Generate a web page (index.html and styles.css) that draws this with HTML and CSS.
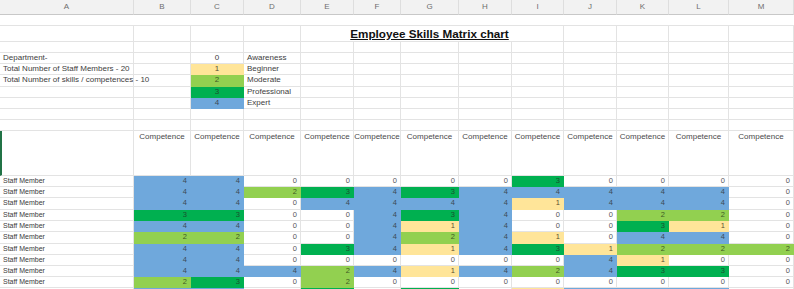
FILE: index.html
```html
<!DOCTYPE html>
<html>
<head>
<meta charset="utf-8">
<link rel="stylesheet" href="styles.css">
</head>
<body>
<div class="sheet">
  <div class="h">A</div><div class="h">B</div><div class="h">C</div><div class="h">D</div><div class="h">E</div><div class="h">F</div><div class="h">G</div><div class="h">H</div><div class="h">I</div><div class="h">J</div><div class="h">K</div><div class="h">L</div><div class="h">M</div>

  <div class="c full"></div>

  <div class="c"></div><div class="c"></div><div class="c"></div><div class="c"></div>
  <div class="c title"><span>Employee Skills Matrix chart</span></div>
  <div class="c"></div><div class="c"></div><div class="c"></div><div class="c"></div>

  <div class="c"></div><div class="c"></div><div class="c"></div><div class="c"></div><div class="c"></div><div class="c"></div><div class="c"></div><div class="c"></div><div class="c"></div><div class="c"></div><div class="c"></div><div class="c"></div><div class="c"></div>

  <div class="c t">Department-</div><div class="c"></div><div class="c m">0</div><div class="c t">Awareness</div><div class="c"></div><div class="c"></div><div class="c"></div><div class="c"></div><div class="c"></div><div class="c"></div><div class="c"></div><div class="c"></div><div class="c"></div>

  <div class="c t">Total Number of Staff Members - 20</div><div class="c"></div><div class="c m y">1</div><div class="c t">Beginner</div><div class="c"></div><div class="c"></div><div class="c"></div><div class="c"></div><div class="c"></div><div class="c"></div><div class="c"></div><div class="c"></div><div class="c"></div>

  <div class="c t">Total Number of skills / competences - 10</div><div class="c"></div><div class="c m lg">2</div><div class="c t">Moderate</div><div class="c"></div><div class="c"></div><div class="c"></div><div class="c"></div><div class="c"></div><div class="c"></div><div class="c"></div><div class="c"></div><div class="c"></div>

  <div class="c"></div><div class="c"></div><div class="c m dg">3</div><div class="c t">Professional</div><div class="c"></div><div class="c"></div><div class="c"></div><div class="c"></div><div class="c"></div><div class="c"></div><div class="c"></div><div class="c"></div><div class="c"></div>

  <div class="c"></div><div class="c"></div><div class="c m b">4</div><div class="c t">Expert</div><div class="c"></div><div class="c"></div><div class="c"></div><div class="c"></div><div class="c"></div><div class="c"></div><div class="c"></div><div class="c"></div><div class="c"></div>

  <div class="c"></div><div class="c"></div><div class="c"></div><div class="c"></div><div class="c"></div><div class="c"></div><div class="c"></div><div class="c"></div><div class="c"></div><div class="c"></div><div class="c"></div><div class="c"></div><div class="c"></div>

  <div class="c"></div><div class="c"></div><div class="c"></div><div class="c"></div><div class="c"></div><div class="c"></div><div class="c"></div><div class="c"></div><div class="c"></div><div class="c"></div><div class="c"></div><div class="c"></div><div class="c"></div>

  <div class="c sel"></div>
  <div class="c comp">Competence</div><div class="c comp">Competence</div><div class="c comp">Competence</div><div class="c comp">Competence</div><div class="c comp">Competence</div><div class="c comp">Competence</div><div class="c comp">Competence</div><div class="c comp">Competence</div><div class="c comp">Competence</div><div class="c comp">Competence</div><div class="c comp">Competence</div><div class="c comp">Competence</div>

  <div class="c s">Staff Member</div><div class="c n b">4</div><div class="c n b">4</div><div class="c n">0</div><div class="c n">0</div><div class="c n">0</div><div class="c n">0</div><div class="c n">0</div><div class="c n dg">3</div><div class="c n">0</div><div class="c n">0</div><div class="c n">0</div><div class="c n">0</div>

  <div class="c s">Staff Member</div><div class="c n b">4</div><div class="c n b">4</div><div class="c n lg">2</div><div class="c n dg">3</div><div class="c n b">4</div><div class="c n dg">3</div><div class="c n b">4</div><div class="c n b">4</div><div class="c n b">4</div><div class="c n b">4</div><div class="c n b">4</div><div class="c n">0</div>

  <div class="c s">Staff Member</div><div class="c n b">4</div><div class="c n b">4</div><div class="c n">0</div><div class="c n b">4</div><div class="c n b">4</div><div class="c n b">4</div><div class="c n b">4</div><div class="c n y">1</div><div class="c n b">4</div><div class="c n b">4</div><div class="c n b">4</div><div class="c n">0</div>

  <div class="c s">Staff Member</div><div class="c n dg">3</div><div class="c n dg">3</div><div class="c n">0</div><div class="c n">0</div><div class="c n b">4</div><div class="c n dg">3</div><div class="c n b">4</div><div class="c n">0</div><div class="c n">0</div><div class="c n lg">2</div><div class="c n lg">2</div><div class="c n">0</div>

  <div class="c s">Staff Member</div><div class="c n b">4</div><div class="c n b">4</div><div class="c n">0</div><div class="c n">0</div><div class="c n b">4</div><div class="c n y">1</div><div class="c n b">4</div><div class="c n">0</div><div class="c n">0</div><div class="c n dg">3</div><div class="c n y">1</div><div class="c n">0</div>

  <div class="c s">Staff Member</div><div class="c n lg">2</div><div class="c n lg">2</div><div class="c n">0</div><div class="c n">0</div><div class="c n b">4</div><div class="c n lg">2</div><div class="c n b">4</div><div class="c n y">1</div><div class="c n">0</div><div class="c n b">4</div><div class="c n b">4</div><div class="c n">0</div>

  <div class="c s">Staff Member</div><div class="c n b">4</div><div class="c n b">4</div><div class="c n">0</div><div class="c n dg">3</div><div class="c n b">4</div><div class="c n y">1</div><div class="c n b">4</div><div class="c n dg">3</div><div class="c n y">1</div><div class="c n lg">2</div><div class="c n lg">2</div><div class="c n lg">2</div>

  <div class="c s">Staff Member</div><div class="c n b">4</div><div class="c n b">4</div><div class="c n">0</div><div class="c n">0</div><div class="c n">0</div><div class="c n">0</div><div class="c n">0</div><div class="c n">0</div><div class="c n b">4</div><div class="c n y">1</div><div class="c n">0</div><div class="c n">0</div>

  <div class="c s">Staff Member</div><div class="c n b">4</div><div class="c n b">4</div><div class="c n b">4</div><div class="c n lg">2</div><div class="c n b">4</div><div class="c n y">1</div><div class="c n b">4</div><div class="c n lg">2</div><div class="c n b">4</div><div class="c n dg">3</div><div class="c n dg">3</div><div class="c n">0</div>

  <div class="c s">Staff Member</div><div class="c n lg">2</div><div class="c n dg">3</div><div class="c n">0</div><div class="c n lg">2</div><div class="c n">0</div><div class="c n">0</div><div class="c n">0</div><div class="c n">0</div><div class="c n">0</div><div class="c n">0</div><div class="c n">0</div><div class="c n">0</div>

  <div class="c"></div><div class="c b"></div><div class="c b"></div><div class="c"></div><div class="c dg"></div><div class="c"></div><div class="c dg"></div><div class="c"></div><div class="c y"></div><div class="c b"></div><div class="c b"></div><div class="c b"></div><div class="c"></div>
</div>
</body>
</html>
```

FILE: styles.css
```css
html, body {
  margin: 0;
  padding: 0;
  background: #ffffff;
  overflow: hidden;
}

.sheet {
  display: grid;
  grid-template-columns: 134px 57px 53px 57px 53px 47px 58px 53px 52px 53px 52px 60px 1fr;
  grid-template-rows: 15px 11px 16px 11px 11px 11px 12px 11px 11px 11px 11px 45px 11px 11px 12px 11px 11px 12px 11px 11px 11px 11px 11px;
  font-family: "Liberation Sans", Arial, sans-serif;
  font-size: 8px;
  color: #404040;
  width: 794px;
  height: 289px;
  overflow: hidden;
}

.h {
  background: #f2f2f2;
  border-right: 1px solid #dedede;
  border-bottom: 1px solid #c8c8c8;
  color: #6e6e6e;
  text-align: center;
  line-height: 14px;
  font-size: 8px;
}

.c {
  box-sizing: border-box;
  border-right: 1px solid #e3e3e3;
  border-bottom: 1px solid #e3e3e3;
  white-space: nowrap;
  min-width: 0;
  line-height: 10px;
}

.full {
  grid-column: 1 / -1;
  border-right: none;
}

.title {
  grid-column: 5 / 10;
  display: flex;
  justify-content: center;
  align-items: flex-end;
  font-size: 11.7px;
  font-weight: bold;
  color: #111111;
  padding-bottom: 1px;
  padding-right: 5px;
  line-height: 13px;
}

.title span {
  text-decoration: underline;
  text-underline-offset: 1px;
}

.t {
  padding-left: 3px;
  overflow: visible;
  position: relative;
  z-index: 1;
}

.m {
  text-align: center;
}

.s {
  padding-left: 3px;
  font-size: 7px;
  color: #3a3a3a;
}

.n {
  text-align: right;
  padding-right: 3px;
  font-size: 7.5px;
  color: #555555;
}

.comp {
  text-align: center;
  padding-top: 1px;
  line-height: 9px;
  overflow: visible;
  color: #4a4a4a;
}

.sel {
  border-left: 2px solid #217346;
}

.b {
  background: #6fa8dc;
  border-color: #6fa8dc;
  color: #3c4a58;
}

.y {
  background: #ffe599;
  border-color: #ffe599;
  color: #5a5032;
}

.lg {
  background: #92d050;
  border-color: #92d050;
  color: #3f5a25;
}

.dg {
  background: #00b050;
  border-color: #00b050;
  color: #1c4d2f;
}
```
